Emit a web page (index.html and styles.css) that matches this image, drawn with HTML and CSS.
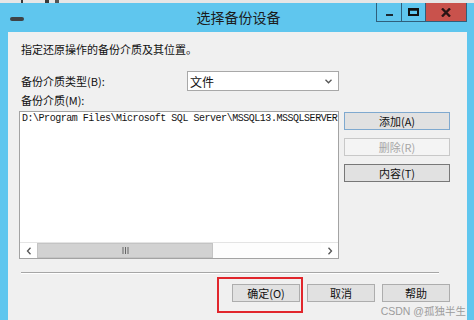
FILE: index.html
```html
<!DOCTYPE html>
<html lang="zh">
<head>
    <meta charset="UTF-8">
    <meta name="viewport" content="width=device-width, initial-scale=1.0">
    <title>选择备份设备</title>
    <link rel="stylesheet" href="styles.css">
</head>
<body>
    <div class="desk"><span class="mark mark-a"></span><span class="mark mark-b"></span></div>
    <div class="window">
        <div class="titlebar">
            <span class="sysicon"></span>
            <span class="title">选择备份设备</span>
            <div class="caption">
                <span class="cap cap-min">
                    <svg width="7" height="3" viewBox="0 0 7 3"><rect x="0" y="0" width="7" height="2" fill="#1b2a33"/></svg>
                </span>
                <span class="cap cap-max">
                    <svg width="11" height="8" viewBox="0 0 11 8"><rect x="1" y="1.5" width="9" height="5.5" fill="none" stroke="#111" stroke-width="2"/><rect x="0" y="0" width="11" height="2.5" fill="#111"/></svg>
                </span>
                <span class="cap cap-close">
                    <svg width="10" height="9" viewBox="0 0 10 9"><path d="M1 0.5 L9 8.5 M9 0.5 L1 8.5" stroke="#2a1414" stroke-width="2.4"/></svg>
                </span>
            </div>
        </div>

        <div class="client">
            <p class="intro">指定还原操作的备份介质及其位置。</p>

            <div class="type-row">
                <span class="type-label">备份介质类型(B):</span>
                <div class="combo">
                    <span>文件</span>
                    <svg width="7" height="5" viewBox="0 0 7 5"><path d="M0.5 0.8 L3.5 3.8 L6.5 0.8" fill="none" stroke="#555" stroke-width="1.3"/></svg>
                </div>
            </div>

            <div class="media-label">备份介质(M):</div>

            <div class="media-row">
                <div class="listbox">
                    <div class="items">
                        <div class="item">D:\Program Files\Microsoft SQL Server\MSSQL13.MSSQLSERVER</div>
                    </div>
                    <div class="hscroll">
                        <span class="arrow">
                            <svg width="6" height="8" viewBox="0 0 6 8"><path d="M4.5 0.8 L1.5 4 L4.5 7.2" fill="none" stroke="#555" stroke-width="1.3"/></svg>
                        </span>
                        <span class="thumb">
                            <svg width="7" height="7" viewBox="0 0 7 7"><path d="M1 0 V7 M3.5 0 V7 M6 0 V7" stroke="#666" stroke-width="1"/></svg>
                        </span>
                        <span class="track"></span>
                        <span class="arrow">
                            <svg width="6" height="8" viewBox="0 0 6 8"><path d="M1.5 0.8 L4.5 4 L1.5 7.2" fill="none" stroke="#555" stroke-width="1.3"/></svg>
                        </span>
                    </div>
                </div>
                <div class="side-buttons">
                    <button class="btn btn-focus">添加(A)</button>
                    <button class="btn" disabled>删除(R)</button>
                    <button class="btn btn-dark">内容(T)</button>
                </div>
            </div>

            <div class="sep"></div>

            <div class="footer">
                <div class="ok-wrap">
                    <button class="btn btn-footer">确定(O)</button>
                    <span class="highlight"></span>
                </div>
                <button class="btn btn-footer">取消</button>
                <button class="btn btn-footer">帮助</button>
            </div>

            <span class="watermark">CSDN @孤独半生</span>
        </div>
    </div>
</body>
</html>
```

FILE: styles.css
```css
* {
    box-sizing: border-box;
}

html, body {
    margin: 0;
    padding: 0;
    width: 474px;
    height: 320px;
    overflow: hidden;
}

body {
    background: #5fc6ee;
    font-family: "Noto Sans CJK SC", "Liberation Sans", sans-serif;
    font-size: 11px;
    color: #111;
}

/* 窗口后面的桌面 */
.desk {
    height: 3px;
    background: #e6e6e6;
    display: flex;
}

.mark {
    height: 3px;
    background: #3a3a3a;
}

.mark-a {
    width: 2px;
    margin-left: 21px;
}

.mark-b {
    width: 4px;
    margin-left: 22px;
    box-shadow: 10px 0 0 #555;
}

.window {
    background: #5fc6ee;
    padding: 0 7px 0 8px;
    height: 317px;
    display: flex;
    flex-direction: column;
}

/* 标题栏 */
.titlebar {
    height: 29px;
    margin: 0 -7px 0 -8px;
    padding: 0 7px 0 10px;
    display: grid;
    grid-template-columns: 1fr auto 1fr;
    align-items: center;
}

.sysicon {
    width: 14px;
    height: 4px;
    border-radius: 2px;
    background: #3f4346;
    margin-top: 3px;
}

.title {
    font-size: 14px;
    line-height: 29px;
    color: #1c1c1c;
}

.caption {
    justify-self: end;
    align-self: start;
    display: flex;
    height: 19px;
    border: 1px solid #2f5f7c;
    border-top: none;
}

.cap {
    display: flex;
    align-items: center;
    justify-content: center;
    height: 18px;
    width: 25px;
}

.cap-min {
    border-right: 1px solid #2f5f7c;
    padding-top: 6px;
}

.cap-max {
    width: 24px;
    border-right: 1px solid #2f5f7c;
}

.cap-close {
    width: 40px;
    background: #c9524c;
}

/* 内容区 */
.client {
    position: relative;
    flex: 1;
    background: #f0f0f0;
    padding: 11px 0 0 13px;
}

.intro {
    margin: 0;
    line-height: 12px;
}

.type-row {
    display: flex;
    align-items: center;
    margin-top: 16px;
    height: 20px;
}

.type-label {
    width: 166px;
}

.combo {
    width: 152px;
    height: 20px;
    background: #fff;
    border: 1px solid #a8a8a8;
    display: flex;
    align-items: center;
    justify-content: space-between;
    padding: 0 6px 0 2px;
    font-size: 12px;
}

.media-label {
    margin-top: 3px;
    line-height: 12px;
}

.media-row {
    display: flex;
    align-items: flex-start;
    margin-top: 5px;
}

.listbox {
    width: 320px;
    height: 148px;
    margin-left: -2px;
    background: #fff;
    border: 1px solid #a3a3a3;
    display: flex;
    flex-direction: column;
}

.items {
    flex: 1;
    overflow: hidden;
    padding: 1px 0 0 2px;
}

.item {
    font-family: "Liberation Mono", monospace;
    font-size: 10px;
    letter-spacing: -0.47px;
    line-height: 12px;
    white-space: nowrap;
    color: #141414;
}

.hscroll {
    display: flex;
    height: 16px;
    border-top: 1px solid #e4e4e4;
}

.arrow {
    width: 17px;
    display: flex;
    align-items: center;
    justify-content: center;
    background: #fff;
}

.thumb {
    width: 176px;
    background: #d2d2d2;
    border: 1px solid #c4c4c4;
    display: flex;
    align-items: center;
    justify-content: center;
}

.track {
    flex: 1;
    background: #fdfdfd;
}

.side-buttons {
    display: flex;
    flex-direction: column;
    gap: 8px;
    margin: 1px 0 0 5px;
}

.btn {
    width: 106px;
    height: 18px;
    padding: 0;
    background: #e1e1e1;
    border: 1px solid #adadad;
    font-family: "Noto Sans CJK SC", "Liberation Sans", sans-serif;
    font-size: 11px;
    line-height: 14px;
    color: #111;
}

.btn-focus {
    border-color: #7fa9cf;
}

.btn-dark {
    border-color: #777;
}

.btn:disabled {
    background: #f4f4f4;
    border-color: #c8c8c8;
    color: #a6a6a6;
}

.sep {
    width: 418px;
    margin-top: 13px;
    border-top: 1px solid #a6a6a6;
    border-bottom: 1px solid #fff;
}

.footer {
    width: 429px;
    display: flex;
    justify-content: flex-end;
    gap: 7px;
    margin-top: 10px;
}

.btn-footer {
    width: 68px;
}

.ok-wrap {
    position: relative;
    display: flex;
}

/* 截图里的红框标注 */
.highlight {
    position: absolute;
    left: -15px;
    top: -7px;
    width: 86px;
    height: 36px;
    border: 2px solid #e1262c;
}

.watermark {
    position: absolute;
    right: 1px;
    bottom: 2px;
    font-size: 10.5px;
    color: #9c9c9c;
    font-family: "Liberation Sans", "Noto Sans CJK SC", sans-serif;
}
```
